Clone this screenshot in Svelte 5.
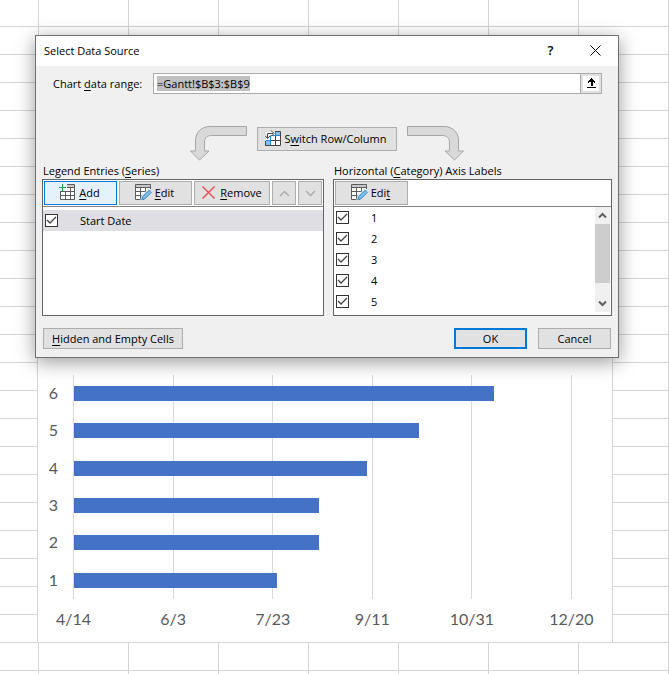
<script>
  import { onMount } from "svelte";

  let range = $state("=Gantt!$B$3:$B$9");
  let seriesOn = $state(true);
  let categories = $state([1, 2, 3, 4, 5].map((n) => ({ n, on: true })));
  let rangeInput;

  // bar lengths in days after 4/14
  const totalDays = 250;
  const bars = [
    { n: 6, days: 211 },
    { n: 5, days: 173 },
    { n: 4, days: 147 },
    { n: 3, days: 123 },
    { n: 2, days: 123 },
    { n: 1, days: 102 },
  ];
  const ticks = ["4/14", "6/3", "7/23", "9/11", "10/31", "12/20"];

  onMount(() => {
    rangeInput.focus();
    rangeInput.select();
  });
</script>

{#snippet editIcon()}
  <svg width="17" height="17" viewBox="0 0 17 17" fill="none" aria-hidden="true">
    <path d="M0.5 0.5h15v15h-15z" fill="#fff" />
    <path d="M1 1h14v2H1z" fill="#c8c8c8" />
    <path d="M0.5 0.5h15v15h-15zM0.5 3.5h15M0.5 7.5h15M0.5 11.5h15M5.5 4v11M10.5 4v11" stroke="#5c5c5c" />
    <path d="M5 17l1.500-5.500 7-7 3.500 1v11.500z" fill="#e1e1e1" />
    <path d="M6.800 15.800l1-3.300 6.200-6.200 2.200 2.200-6.200 6.200z" fill="#83bfee" stroke="#2688d0" />
  </svg>
{/snippet}

<main class="sheet">
  <section class="dialog" role="dialog" aria-labelledby="dialog-title">
    <header>
      <h1 id="dialog-title">Select Data Source</h1>
      <button class="title-btn help" aria-label="Help">?</button>
      <button class="title-btn" aria-label="Close">
        <svg width="11" height="11" viewBox="0 0 11 11">
          <path d="M0.500 0.500l10 10M10.500 0.500l-10 10" stroke="#000" stroke-width="1" />
        </svg>
      </button>
    </header>

    <div class="body">
      <div class="range">
        <label for="range">Chart <u>d</u>ata range:</label>
        <div class="range-box">
          <input id="range" type="text" spellcheck="false" bind:value={range} bind:this={rangeInput} />
          <button class="picker" aria-label="Collapse dialog">
            <svg width="9" height="11" viewBox="0 0 9 11">
              <path d="M4 0h1v1h1v1h1v1h1v2H7V4H6v4H4V4H2v1H1V3h1V2h1V1h1zM0 9h9v1H0z" />
            </svg>
          </button>
        </div>
      </div>

      <div class="switch">
        <svg width="57" height="35" viewBox="0 0 57 35" aria-hidden="true">
          <path d="M56.500 0.500H20C11 0.500 5.500 7 5.500 14v11H0.500l9 9 9.500-9h-4.500V16c0-4 3-6.500 7-6.500h35z" fill="#d9d9d9" stroke="#a6a6a6" />
        </svg>
        <button class="btn switch-btn">
          <svg width="17" height="17" viewBox="0 0 17 17" fill="none" aria-hidden="true">
            <path d="M1 2h15v14H1z" fill="#fff" />
            <path d="M10 2h6v4h-6zM1 11h5v5H1z" fill="#83bfee" />
            <path d="M5.500 6v10M10.500 1v15M6 5.500h10M1 10.500h15" stroke="#2688d0" />
            <path d="M10 1.500h5.500v14H0.500V11M6 10.500h9M10.500 6v9" stroke="#444" />
            <path d="M2.500 8V3.500H8M6 0.500l3 3-3 3M0 5.500l2.500 3 3-3" stroke="#444" />
          </svg>
          <span>S<u>w</u>itch Row/Column</span>
        </button>
        <svg width="57" height="35" viewBox="0 0 57 35" aria-hidden="true">
          <path d="M0.500 0.500H37C46 0.500 51.500 7 51.500 14v11h5l-9 9-9.500-9h4.500V16c0-4-3-6.500-7-6.500h-35z" fill="#d9d9d9" stroke="#a6a6a6" />
        </svg>
      </div>

      <div class="panels">
        <section>
          <h2>Legend Entries (<u>S</u>eries)</h2>
          <div class="panel">
            <div class="toolbar">
              <button class="btn tool hot">
                <svg width="17" height="17" viewBox="0 0 17 17" fill="none" aria-hidden="true">
                  <path d="M1.500 1.500h14v14h-14z" fill="#fff" />
                  <path d="M8 1h7v3H8z" fill="#c8c8c8" />
                  <path d="M8 0.500h7.500v15H1.500V7M8 3.500h7.500M2 7.500h13.500M2 11.500h13.500M6.500 7v8.500M11.500 4v11.500" stroke="#5c5c5c" />
                  <path d="M0 0h7v7H0z" fill="#e5f1fb" />
                  <path d="M3.500 0v7M0 3.500h7" stroke="#21a04b" />
                </svg>
                <span><u>A</u>dd</span>
              </button>
              <button class="btn tool">{@render editIcon()}<span><u>E</u>dit</span></button>
              <button class="btn tool remove">
                <svg width="13" height="13" viewBox="0 0 13 13" aria-hidden="true">
                  <path d="M0.500 0.500l12 12M12.500 0.500l-12 12" stroke="#ee4444" stroke-width="1.300" />
                </svg>
                <span><u>R</u>emove</span>
              </button>
              <button class="btn move" disabled aria-label="Move up">
                <svg width="11" height="7" viewBox="0 0 11 7"><path d="M1 6l4.500-4.500L10 6" /></svg>
              </button>
              <button class="btn move" disabled aria-label="Move down">
                <svg width="11" height="7" viewBox="0 0 11 7"><path d="M1 1l4.500 4.500L10 1" /></svg>
              </button>
            </div>
            <div class="list series">
              <label class="item selected">
                <input type="checkbox" bind:checked={seriesOn} />
                <span>Start Date</span>
              </label>
            </div>
          </div>
        </section>

        <section>
          <h2>Horizontal (<u>C</u>ategory) Axis Labels</h2>
          <div class="panel">
            <div class="toolbar">
              <button class="btn tool">{@render editIcon()}<span>Edi<u>t</u></span></button>
            </div>
            <div class="list">
              <div class="items">
                {#each categories as category (category.n)}
                  <label class="item">
                    <input type="checkbox" bind:checked={category.on} />
                    <span>{category.n}</span>
                  </label>
                {/each}
              </div>
              <div class="scrollbar">
                <button aria-label="Scroll up">
                  <svg width="9" height="7" viewBox="0 0 9 7"><path d="M1 5.500L4.500 2 8 5.500" /></svg>
                </button>
                <div class="thumb"></div>
                <button aria-label="Scroll down">
                  <svg width="9" height="7" viewBox="0 0 9 7"><path d="M1 1.500L4.500 5 8 1.500" /></svg>
                </button>
              </div>
            </div>
          </div>
        </section>
      </div>

      <footer>
        <button class="btn hidden-cells"><span><u>H</u>idden and Empty Cells</span></button>
        <button class="btn default">OK</button>
        <button class="btn">Cancel</button>
      </footer>
    </div>
  </section>

  <section class="chart" aria-label="Gantt chart">
    <div class="plot">
      <div class="gridlines">
        {#each ticks as tick (tick)}
          <i></i>
        {/each}
      </div>
      {#each bars as bar (bar.n)}
        <div class="row">
          <span class="name">{bar.n}</span>
          <div class="track">
            <div class="bar" style="width: {(bar.days / totalDays) * 100}%"></div>
          </div>
        </div>
      {/each}
    </div>
    <div class="axis">
      {#each ticks as tick (tick)}
        <span>{tick}</span>
      {/each}
    </div>
  </section>
</main>

<style>
  :global(body) {
    margin: 0;
  }

  .sheet {
    box-sizing: border-box;
    min-height: 100vh;
    padding: 35px 50px 31px 35px;
    background:
      linear-gradient(to right, #d4d4d4 1px, transparent 1px) 38px 0 / 90px 28px,
      linear-gradient(to bottom, #d4d4d4 1px, transparent 1px) 0 26px / 90px 28px,
      #fff;
    font-family: "Open Sans", "Noto Sans", sans-serif;
    font-size: 11px;
    line-height: 15px;
    color: #000;
  }

  button,
  input {
    font: inherit;
    color: inherit;
  }

  u {
    text-underline-offset: 2px;
  }

  h1,
  h2 {
    margin: 0;
    font-size: 11px;
    font-weight: 400;
  }

  .dialog {
    position: relative;
    z-index: 1;
    border: 1px solid #707070;
    background: #f0f0f0;
    box-shadow: 0 4px 18px rgba(0, 0, 0, 0.4);
  }

  header {
    display: flex;
    align-items: center;
    height: 30px;
    padding-left: 8px;
    background: #fff;
  }

  header h1 {
    flex: 1;
    padding-bottom: 2px;
  }

  .title-btn {
    display: flex;
    align-items: center;
    justify-content: center;
    width: 45px;
    height: 30px;
    padding: 0 0 2px;
    border: 0;
    background: none;
  }

  .help {
    font-size: 13px;
    font-weight: 600;
  }

  .body {
    padding: 7px 6px 8px;
  }

  .range {
    display: flex;
    align-items: center;
    padding: 0 10px 0 11px;
  }

  .range label {
    width: 100px;
  }

  .range-box {
    display: flex;
    flex: 1;
    box-sizing: border-box;
    height: 21px;
    border: 1px solid #ababab;
    background: #fff;
  }

  .range-box input {
    flex: 1;
    min-width: 0;
    padding: 0 3px;
    border: 0;
    outline: 0;
    background: none;
  }

  .range-box input::selection {
    background: #c0c0c0;
    color: #000;
  }

  .picker {
    display: flex;
    align-items: center;
    justify-content: center;
    width: 20px;
    padding: 0;
    border: 2px solid #e1e1e1;
    outline: 1px solid #ababab;
    background: #fff;
  }

  .btn {
    display: flex;
    align-items: center;
    justify-content: center;
    box-sizing: border-box;
    padding: 0;
    border: 1px solid #adadad;
    background: #e1e1e1;
  }

  .switch {
    display: flex;
    justify-content: center;
    gap: 10px;
    margin-top: 32px;
  }

  .switch-btn {
    gap: 2px;
    width: 140px;
    height: 24px;
    margin-top: 1px;
    padding: 0 2px 1px 0;
  }

  .panels {
    display: grid;
    grid-template-columns: 282fr 279fr;
    gap: 9px;
    margin-top: 2px;
  }

  .panels h2 {
    height: 16px;
    padding-left: 1px;
  }

  .panel {
    border: 1px solid #646464;
    background: #fff;
  }

  .toolbar {
    display: flex;
    gap: 2px;
    padding: 1px;
    border-bottom: 1px solid #828282;
  }

  .tool {
    gap: 3px;
    width: 73px;
    height: 24px;
    padding: 0 2px 1px 0;
  }

  .hot {
    border-color: #0078d7;
    background: #e5f1fb;
  }

  .remove {
    gap: 5px;
    width: 76px;
    padding-right: 0;
  }

  .move {
    width: 24px;
    height: 24px;
  }

  .move path {
    fill: none;
    stroke: #adadad;
    stroke-width: 1.5;
  }

  .list {
    display: flex;
    height: 108px;
  }

  .series {
    box-sizing: border-box;
    padding-top: 3px;
  }

  .items {
    flex: 1;
  }

  .item {
    display: flex;
    align-items: center;
    gap: 22px;
    height: 21px;
    padding-left: 2px;
  }

  .selected {
    flex: 1;
    background: #dfdee3;
  }

  .item input {
    appearance: none;
    width: 13px;
    height: 13px;
    margin: 0;
    border: 1px solid #333;
    background: #fff;
  }

  .item input:checked {
    background: #fff
      url("data:image/svg+xml,%3Csvg xmlns='http://www.w3.org/2000/svg' viewBox='0 0 11 11'%3E%3Cpath d='M1 5l3 3 6-6' fill='none' stroke='%23444' stroke-width='1.300'/%3E%3C/svg%3E");
  }

  .scrollbar {
    display: flex;
    flex-direction: column;
    width: 15px;
    height: 105px;
    margin-right: 1px;
    background: #f0f0f0;
  }

  .scrollbar button {
    display: flex;
    align-items: center;
    justify-content: center;
    height: 17px;
    padding: 0;
    border: 0;
    background: none;
  }

  .scrollbar button:last-child {
    margin-top: auto;
  }

  .scrollbar path {
    fill: none;
    stroke: #606060;
    stroke-width: 2;
  }

  .thumb {
    height: 59px;
    background: #cdcdcd;
  }

  footer {
    display: flex;
    gap: 11px;
    margin-top: 12px;
    padding: 0 1px;
  }

  footer .btn {
    width: 73px;
    height: 21px;
  }

  footer .hidden-cells {
    width: 140px;
    margin-right: auto;
  }

  footer .default {
    border: 2px solid #0078d7;
  }

  .chart {
    margin: 0 6px 0 2px;
    padding: 17px 40px 0 0;
    border: 1px solid #d4d4d4;
    border-top: 0;
    background: #fff;
    font-family: Lato, "Open Sans", sans-serif;
    font-size: 16px;
    line-height: 20px;
    color: #595959;
  }

  .plot {
    position: relative;
    display: grid;
    grid-template-rows: repeat(6, 1fr);
    height: 224px;
  }

  .gridlines {
    position: absolute;
    inset: 0 0 0 35px;
    display: flex;
    justify-content: space-between;
  }

  .gridlines i {
    width: 1px;
    background: #d9d9d9;
  }

  .row {
    position: relative;
    display: flex;
    align-items: center;
  }

  .name {
    box-sizing: border-box;
    width: 36px;
    padding: 0 16px 1px 0;
    text-align: right;
  }

  .track {
    flex: 1;
  }

  .bar {
    height: 15px;
    background: #4472c4;
  }

  .axis {
    display: flex;
    justify-content: space-between;
    padding: 10px 0 13px 35px;
  }

  .axis span {
    display: flex;
    justify-content: center;
    width: 1px;
  }
</style>
